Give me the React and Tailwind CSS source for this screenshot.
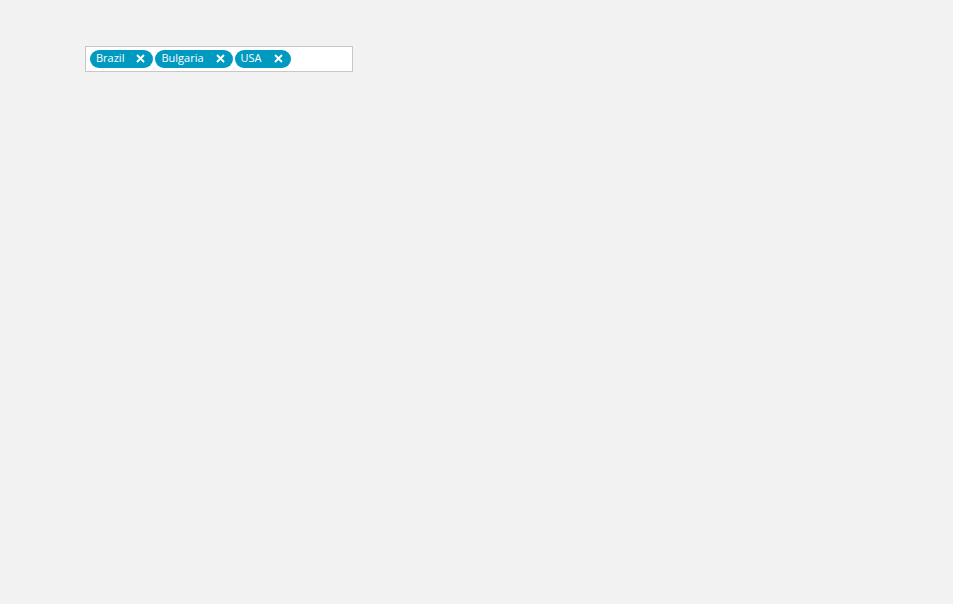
import React, { useState } from "react";

function CloseIcon() {
  return (
    <svg width="9" height="9" viewBox="0 0 9 9" fill="none" stroke="currentColor" strokeWidth="1.9" aria-hidden="true">
      <path d="M1 1L8 8M8 1L1 8" />
    </svg>
  );
}

function Token({ label, onRemove }) {
  return (
    <li className="flex h-[18px] shrink-0 items-center gap-3 rounded-full bg-[#0099bf] pr-2 pb-px pl-[6px] text-[11px] leading-4 text-white">
      <span className="pb-px">{label}</span>
      <button type="button" aria-label={`Remove ${label}`} onClick={onRemove} className="cursor-pointer">
        <CloseIcon />
      </button>
    </li>
  );
}

export default function App() {
  const [countries, setCountries] = useState(["Brazil", "Bulgaria", "USA"]);
  const [text, setText] = useState("");

  const removeCountry = (name) => {
    setCountries(countries.filter((c) => c !== name));
  };

  const handleKeyDown = (e) => {
    const value = text.trim();
    if (e.key === "Enter" && value && !countries.includes(value)) {
      setCountries([...countries, value]);
      setText("");
    }
    if (e.key === "Backspace" && !text) {
      setCountries(countries.slice(0, -1));
    }
  };

  return (
    <main className="min-h-screen bg-[#f2f2f2] px-[85px] py-[46px] font-['Open_Sans',sans-serif]">
      <div className="flex min-h-[26px] w-full max-w-[268px] items-center gap-[2px] border border-[#c7c7c7] bg-white px-[4px]">
        <ul className="flex flex-wrap gap-[2px]">
          {countries.map((country) => (
            <Token key={country} label={country} onRemove={() => removeCountry(country)} />
          ))}
        </ul>
        <input
          type="text"
          aria-label="Add country"
          value={text}
          onChange={(e) => setText(e.target.value)}
          onKeyDown={handleKeyDown}
          className="h-[18px] min-w-0 flex-1 text-[11px] outline-none"
        />
      </div>
    </main>
  );
}
